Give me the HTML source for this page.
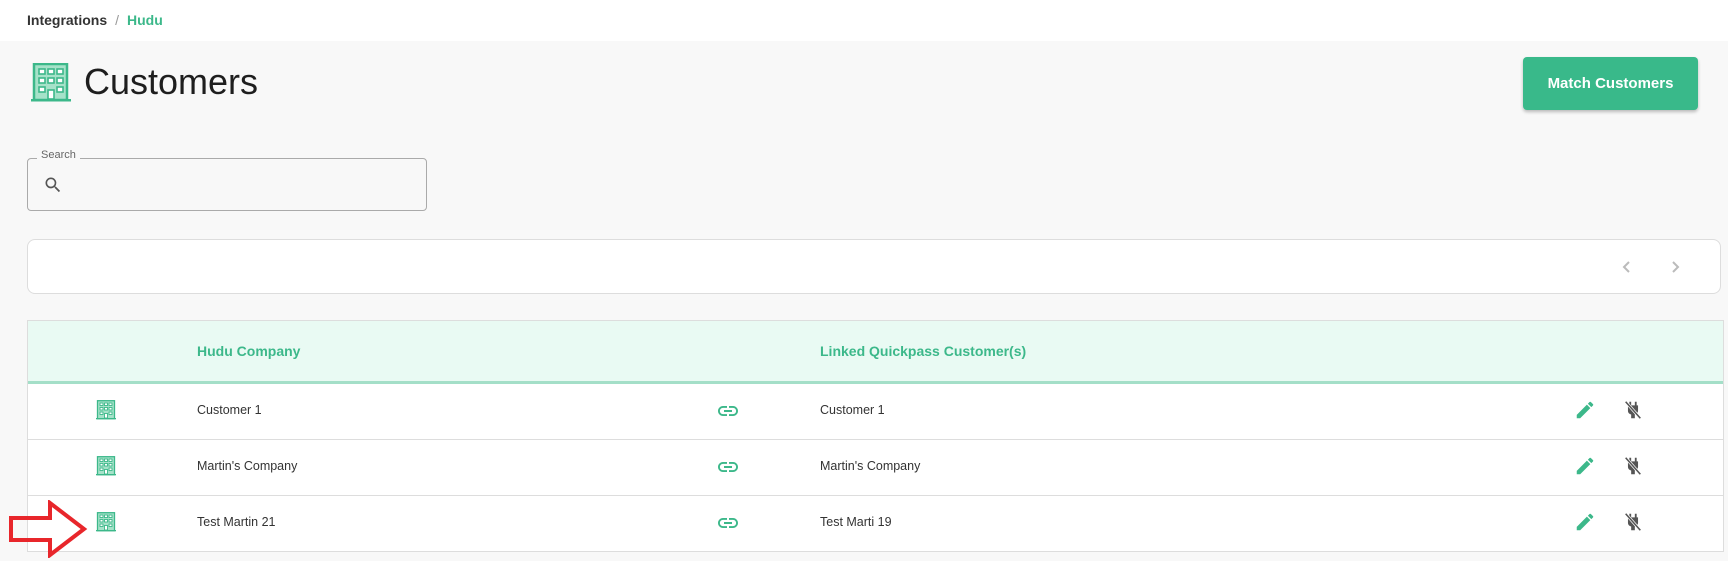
<!DOCTYPE html>
<html><head><meta charset="utf-8"><style>
*{box-sizing:border-box;margin:0;padding:0}
body{width:1728px;height:561px;overflow:hidden;background:#f8f8f8;font-family:"Liberation Sans",sans-serif;position:relative;color:#222}
.top{position:absolute;left:0;top:0;width:1728px;height:41px;background:#fff}
.abs{position:absolute}
.bc{left:27px;top:12px;font-size:14px;color:#333;font-weight:bold}
.bc .s{color:#999;font-weight:normal;margin:0 8px}
.bc .h{color:#3cb88a}
.title{left:84px;top:61px;font-size:36px;color:#1e1e1e}
.btn{left:1523px;top:57px;width:175px;height:53px;background:#39b98a;border-radius:4px;box-shadow:0 2px 3px rgba(0,0,0,.25);color:#fff;font-weight:bold;font-size:15px;text-align:center;line-height:53px}
.search{left:27px;top:158px;width:400px;height:53px;border:1px solid #aaa;border-radius:4px}
.slab{left:37px;top:149px;font-size:11px;color:#666;background:#f8f8f8;padding:0 4px}
.card{left:27px;top:239px;width:1694px;height:55px;background:#fff;border:1px solid #ddd;border-radius:8px}
.table{left:27px;top:320px;width:1697px;height:232px;background:#fff;border:1px solid #ddd}
.thead{position:absolute;left:0;top:0;width:100%;height:63px;background:#e9faf3;border-bottom:3px solid #a4dfc8}
.th{position:absolute;top:22px;font-size:14px;font-weight:bold;color:#3cb88a}
.row{position:absolute;left:0;width:100%;height:56px;border-bottom:1px solid #ddd}
.td{position:absolute;top:19px;font-size:12.5px;color:#333}
</style></head><body>
<div class="top"></div>
<div class="abs bc">Integrations<span class="s">/</span><span class="h">Hudu</span></div>
<svg class="abs" style="left:31px;top:63px" width="40" height="39" viewBox="0 0 40 39">
<rect x="3" y="1" width="33" height="36" fill="#a6e2c9" stroke="#3cb88a" stroke-width="2.5"/>
<rect x="0" y="36" width="40" height="2.5" fill="#3cb88a"/>
<g fill="#fff" stroke="#3cb88a" stroke-width="1.6">
<rect x="8" y="6" width="6" height="5"/><rect x="17" y="6" width="6" height="5"/><rect x="26" y="6" width="6" height="5"/>
<rect x="8" y="15" width="6" height="5"/><rect x="17" y="15" width="6" height="5"/><rect x="26" y="15" width="6" height="5"/>
<rect x="8" y="24" width="6" height="5"/><rect x="26" y="24" width="6" height="5"/><rect x="17" y="27" width="6" height="9"/></g></svg>
<div class="abs title">Customers</div>
<div class="abs btn">Match Customers</div>
<div class="abs search"></div>
<div class="abs slab">Search</div>
<svg class="abs" style="left:43px;top:175px" width="20" height="20" viewBox="0 0 24 24"><path fill="#555" d="M15.5 14h-.79l-.28-.27A6.47 6.47 0 0016 9.5 6.5 6.5 0 109.5 16c1.61 0 3.09-.59 4.230-1.57l.27.28v.79l5 4.99L20.49 19l-4.99-5zm-6 0C7.01 14 5 11.99 5 9.5S7.01 5 9.5 5 14 7.01 14 9.5 11.99 14 9.5 14z"/></svg>
<div class="abs card"></div>
<svg class="abs" style="left:1620px;top:259px" width="14" height="16" viewBox="0 0 14 16"><path d="M9 3L4 8l5 5" fill="none" stroke="#bbb" stroke-width="2"/></svg>
<svg class="abs" style="left:1668px;top:259px" width="14" height="16" viewBox="0 0 14 16"><path d="M5 3l5 5-5 5" fill="none" stroke="#bbb" stroke-width="2"/></svg>
<div class="abs table">
<div class="thead"><div class="th" style="left:169px">Hudu Company</div><div class="th" style="left:792px">Linked Quickpass Customer(s)</div></div>
<div class="row" style="top:63px"><div class="td" style="left:169px">Customer 1</div><div class="td" style="left:792px">Customer 1</div></div>
<div class="row" style="top:119px"><div class="td" style="left:169px">Martin's Company</div><div class="td" style="left:792px">Martin's Company</div></div>
<div class="row" style="top:175px;border-bottom:none"><div class="td" style="left:169px">Test Martin 21</div><div class="td" style="left:792px">Test Marti 19</div></div>
</div>
<svg width="0" height="0" style="position:absolute"><defs>
<g id="b"><rect x="1.5" y="0.7" width="17" height="18" fill="#a6e2c9" stroke="#3cb88a" stroke-width="1.3"/><rect x="0" y="18" width="20" height="1.3" fill="#3cb88a"/>
<g fill="#fff" stroke="#3cb88a" stroke-width=".9"><rect x="4" y="3" width="3" height="2.5"/><rect x="8.5" y="3" width="3" height="2.5"/><rect x="13" y="3" width="3" height="2.5"/><rect x="4" y="7.5" width="3" height="2.5"/><rect x="8.5" y="7.5" width="3" height="2.5"/><rect x="13" y="7.5" width="3" height="2.5"/><rect x="4" y="12" width="3" height="2.5"/><rect x="13" y="12" width="3" height="2.5"/><rect x="8.5" y="13.5" width="3" height="4.5"/></g></g>
<g id="l"><path fill="#3cb88a" d="M3.9 12c0-1.71 1.39-3.1 3.1-3.1h4V7H7c-2.76 0-5 2.24-5 5s2.24 5 5 5h4v-1.9H7c-1.71 0-3.1-1.39-3.1-3.1zM8 13h8v-2H8v2zm9-6h-4v1.9h4c1.71 0 3.1 1.39 3.1 3.1s-1.39 3.1-3.1 3.1h-4V17h4c2.76 0 5-2.24 5-5s-2.24-5-5-5z"/></g>
<g id="p"><path fill="#3cb88a" d="M3 17.25V21h3.75L17.81 9.94l-3.75-3.75L3 17.25zM20.71 7.04a1 1 0 000-1.410l-2.34-2.34a1 1 0 00-1.41 0l-1.83 1.83 3.75 3.75 1.83-1.83z"/></g>
<g id="u"><path fill="#555" d="M8 3h2v4h4V3h2v4h1.5v6c0 2-1.5 3.6-3.5 3.9V21h-4v-4.1C8 16.6 6.5 15 6.5 13V7H8z"/><path d="M4 3l16 18" stroke="#fff" stroke-width="3.2"/><path d="M4 3l16 18" stroke="#555" stroke-width="1.7"/></g>
</defs></svg>
<svg class="abs" style="left:96px;top:400px" width="20" height="20"><use href="#b"/></svg>
<svg class="abs" style="left:96px;top:456px" width="20" height="20"><use href="#b"/></svg>
<svg class="abs" style="left:96px;top:512px" width="20" height="20"><use href="#b"/></svg>
<svg class="abs" style="left:716px;top:399px" width="24" height="24" viewBox="0 0 24 24"><use href="#l"/></svg>
<svg class="abs" style="left:716px;top:455px" width="24" height="24" viewBox="0 0 24 24"><use href="#l"/></svg>
<svg class="abs" style="left:716px;top:511px" width="24" height="24" viewBox="0 0 24 24"><use href="#l"/></svg>
<svg class="abs" style="left:1574px;top:399px" width="22" height="22" viewBox="0 0 24 24"><use href="#p"/></svg>
<svg class="abs" style="left:1574px;top:455px" width="22" height="22" viewBox="0 0 24 24"><use href="#p"/></svg>
<svg class="abs" style="left:1574px;top:511px" width="22" height="22" viewBox="0 0 24 24"><use href="#p"/></svg>
<svg class="abs" style="left:1622px;top:399px" width="22" height="22" viewBox="0 0 24 24"><use href="#u"/></svg>
<svg class="abs" style="left:1622px;top:455px" width="22" height="22" viewBox="0 0 24 24"><use href="#u"/></svg>
<svg class="abs" style="left:1622px;top:511px" width="22" height="22" viewBox="0 0 24 24"><use href="#u"/></svg>
<svg class="abs" style="left:8px;top:500px" width="80" height="58" viewBox="0 0 80 58"><path d="M3 18H42V3L76 29 42 55V40H3Z" fill="none" stroke="#e8262b" stroke-width="4"/></svg>
</body></html>
